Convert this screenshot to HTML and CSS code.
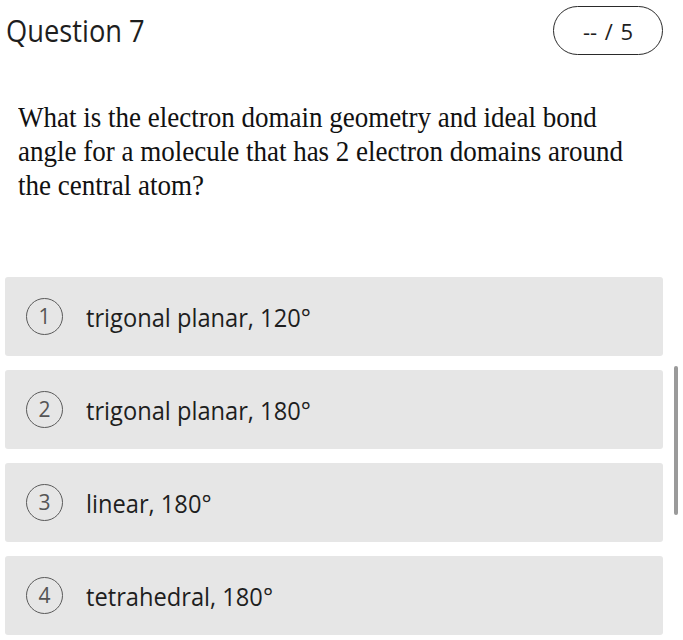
FILE: index.html
```html
<!DOCTYPE html>
<html>
<head>
<meta charset="utf-8">
<link rel="stylesheet" href="styles.css">
</head>
<body>
<div class="page">
  <header class="head">
    <h1 class="title"><span class="sq">Question 7</span></h1>
    <div class="badge"><span class="score">-- / 5</span></div>
  </header>
  <p class="question">What is the electron domain geometry and ideal bond angle for a molecule that has 2 electron domains around the central atom?</p>
  <div class="options">
    <div class="option"><span class="num">1</span><span class="label sq">trigonal planar, 120°</span></div>
    <div class="option"><span class="num">2</span><span class="label sq">trigonal planar, 180°</span></div>
    <div class="option"><span class="num">3</span><span class="label sq">linear, 180°</span></div>
    <div class="option"><span class="num">4</span><span class="label sq">tetrahedral, 180°</span></div>
  </div>
  <div class="scrollbar"></div>
</div>
</body>
</html>
```
FILE: styles.css
```css
html, body {
  margin: 0;
  padding: 0;
  background: #ffffff;
}
body {
  font-family: "Open Sans", "Noto Sans", sans-serif;
  color: #1e1e1e;
}
.page {
  position: relative;
  width: 683px;
  height: 640px;
  overflow: hidden;
}
.sq {
  display: inline-block;
  transform: scaleX(0.88);
  transform-origin: left center;
  white-space: nowrap;
}
.head {
  display: flex;
  justify-content: space-between;
  align-items: center;
  padding: 6px 20px 0 6px;
}
.title {
  margin: 0;
  font-size: 31px;
  font-weight: 400;
  line-height: 49px;
}
.badge {
  box-sizing: border-box;
  width: 110px;
  height: 49px;
  border: 1.5px solid #2a2a2a;
  border-radius: 25px;
  display: flex;
  align-items: center;
  justify-content: center;
  font-size: 22px;
}
.score {
  white-space: pre;
  word-spacing: 2px;
}
.question {
  margin: 45px 0 0 18px;
  width: 680px;
  font-family: "Liberation Serif", "Times New Roman", serif;
  font-size: 30px;
  line-height: 34px;
  color: #111;
  transform: scaleX(0.9);
  transform-origin: left top;
}
.options {
  margin: 75px 20px 0 5px;
  display: flex;
  flex-direction: column;
  gap: 14px;
}
.option {
  height: 79px;
  background: #e6e6e6;
  border-radius: 3px;
  display: flex;
  align-items: center;
  padding-left: 21px;
}
.num {
  box-sizing: border-box;
  width: 37px;
  height: 37px;
  border: 1.5px solid #5a5a5a;
  border-radius: 50%;
  display: flex;
  align-items: center;
  justify-content: center;
  font-size: 21px;
  color: #555;
  flex: none;
  padding-bottom: 1px;
}
.label {
  margin-left: 23px;
  font-size: 26px;
  color: #1e1e1e;
  transform: scaleX(0.91);
}
.scrollbar {
  position: absolute;
  left: 674px;
  top: 366px;
  width: 4px;
  height: 149px;
  border-radius: 2px;
  background: #9a9a9a;
}
```
